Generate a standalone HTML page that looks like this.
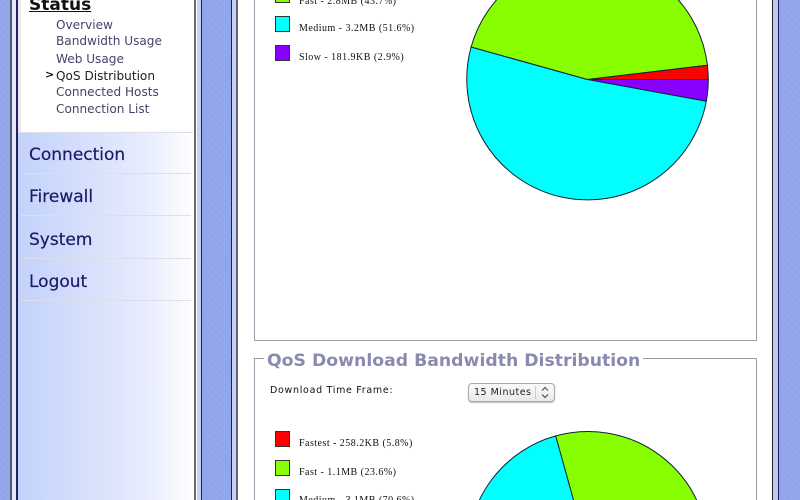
<!DOCTYPE html>
<html><head><meta charset="utf-8"><style>
html,body{margin:0;padding:0;width:800px;height:500px;overflow:hidden;background:#fff}
#w{position:relative;width:800px;height:500px;overflow:clip;background:#fff}
.a{position:absolute}
.sv{font-family:"DejaVu Sans",sans-serif}
.blue{background:#90a4ea;background-image:repeating-linear-gradient(45deg,rgba(255,255,255,.04) 0 2px,rgba(0,0,0,0) 2px 5px)}
.m{left:29px;font:17px/24px "DejaVu Sans",sans-serif;color:#1a1a66;-webkit-text-stroke:.2px #1a1a66}
.sep{left:21px;width:170px;height:1px;background:#dcdfe8}
.s{left:56px;font:12.1px/16px "DejaVu Sans",sans-serif;color:#44446a;white-space:nowrap}
.l{left:299px;font:10px/12px "Liberation Serif",serif;color:#111;white-space:nowrap;letter-spacing:.47px}
.k{left:275px;width:13px;height:14px;border:1px solid #333}
.fs{left:254px;width:501px;border:1px solid #9c9cac}
</style></head><body><div id="w">
<div class="a blue" style="left:0;top:0;width:10px;height:500px"></div>
<div class="a" style="left:10px;top:0;width:2px;height:500px;background:#55556a"></div>
<div class="a" style="left:12px;top:0;width:4px;height:500px;background:#e4e8fc"></div>
<div class="a" style="left:16px;top:0;width:2px;height:500px;background:#22225e"></div>
<div class="a" style="left:18px;top:0;width:176px;height:500px;background:linear-gradient(90deg,#c3d2fb,#e6ebfd 70%,#fff)"></div>
<div class="a" style="left:18px;top:0;width:176px;height:132px;background:#fff"></div>
<div class="a" style="left:18px;top:0;width:3px;height:132px;background:#e8e8ee"></div>
<div class="a" style="left:194px;top:0;width:2px;height:500px;background:#6a6a72"></div>
<div class="a" style="left:196px;top:0;width:1px;height:500px;background:#fff"></div>
<div class="a" style="left:197px;top:0;width:4px;height:500px;background:#c8d0f8"></div>
<div class="a" style="left:201px;top:0;width:1px;height:500px;background:#1c1c60"></div>
<div class="a blue" style="left:202px;top:0;width:29px;height:500px"></div>
<div class="a" style="left:231px;top:0;width:1px;height:500px;background:#1c1c60"></div>
<div class="a" style="left:232px;top:0;width:4px;height:500px;background:#c8d0f8"></div>
<div class="a" style="left:236px;top:0;width:2px;height:500px;background:#66667a"></div>
<div class="a" style="left:772px;top:0;width:1px;height:500px;background:#222"></div>
<div class="a" style="left:773px;top:0;width:5px;height:500px;background:#c0c8f4"></div>
<div class="a" style="left:778px;top:0;width:1px;height:500px;background:#1c1c60"></div>
<div class="a blue" style="left:779px;top:0;width:21px;height:500px"></div>

<div class="a sv" style="left:29px;top:-7px;font-size:17px;line-height:24px;font-weight:bold;color:#111;text-decoration:underline">Status</div>
<div class="a s" style="top:17px">Overview</div>
<div class="a s" style="top:33px">Bandwidth Usage</div>
<div class="a s" style="top:51px">Web Usage</div>
<div class="a sv" style="left:45px;top:68px;font-size:11px;line-height:14px;font-weight:bold;color:#111">&gt;</div>
<div class="a s" style="top:68px;color:#222">QoS Distribution</div>
<div class="a s" style="top:84px">Connected Hosts</div>
<div class="a s" style="top:101px">Connection List</div>

<div class="a sep" style="left:18px;width:175px;top:132px"></div>
<div class="a m" style="top:143px">Connection</div>
<div class="a sep" style="top:173px"></div>
<div class="a m" style="top:185px">Firewall</div>
<div class="a sep" style="top:215px"></div>
<div class="a m" style="top:228px">System</div>
<div class="a sep" style="top:258px"></div>
<div class="a m" style="top:270px">Logout</div>
<div class="a sep" style="top:300px"></div>

<div class="a fs" style="top:-20px;height:359px"></div>
<div class="a fs" style="top:358px;height:160px"></div>
<div class="a sv" style="left:264px;top:349px;padding:0 3px;background:#fff;font-size:17.25px;line-height:24px;font-weight:bold;color:#8a8ab0;white-space:nowrap">QoS Download Bandwidth Distribution</div>

<div class="a k" style="top:-13px;background:#88ff00"></div>
<div class="a l" style="top:-4px">Fast - 2.8MB (43.7%)</div>
<div class="a k" style="top:16px;background:#00ffff"></div>
<div class="a l" style="top:23px">Medium - 3.2MB (51.6%)</div>
<div class="a k" style="top:45px;background:#8800ff"></div>
<div class="a l" style="top:52px">Slow - 181.9KB (2.9%)</div>

<div class="a sv" style="left:270px;top:384px;font-size:9.5px;line-height:13px;letter-spacing:.7px;color:#111;white-space:nowrap">Download Time Frame:</div>
<div class="a" style="left:468px;top:383px;width:85px;height:17px;border:1px solid #aaa;border-radius:4px;background:linear-gradient(#fafafa,#eaeaea);box-shadow:0 1px 1px #bbb"></div>
<div class="a sv" style="left:474px;top:386px;font-size:9.5px;line-height:13px;letter-spacing:.5px;color:#222;white-space:nowrap">15 Minutes</div>
<div class="a" style="left:535px;top:386px;width:1px;height:13px;background:#ccc"></div>
<svg class="a" style="left:536px;top:384px" width="18" height="18"><path d="M6 6.5l3-3 3 3M6 10.5l3 3 3-3" fill="none" stroke="#444" stroke-width="1"/></svg>

<div class="a k" style="top:431px;background:#ff0000"></div>
<div class="a l" style="top:438px">Fastest - 258.2KB (5.8%)</div>
<div class="a k" style="top:460px;background:#88ff00"></div>
<div class="a l" style="top:467px">Fast - 1.1MB (23.6%)</div>
<div class="a k" style="top:489px;background:#00ffff"></div>
<div class="a l" style="top:495px">Medium - 3.1MB (70.6%)</div>

<svg class="a" style="left:0;top:0" width="800" height="500">
<g stroke="#123" stroke-width="1" stroke-linejoin="round">
<path d="M587.5 79.5L708.3 79.5A120.8 120.8 0 0 1 706.3 101.3Z" fill="#8800ff"/>
<path d="M587.5 79.5L706.3 101.3A120.8 120.8 0 1 1 471.1 47.0Z" fill="#00ffff"/>
<path d="M587.5 79.5L471.1 47.0A120.8 120.8 0 0 1 707.4 65.2Z" fill="#88ff00"/>
<path d="M587.5 79.5L707.4 65.2A120.8 120.8 0 0 1 708.3 79.5Z" fill="#ff0000"/>
<path d="M588 552L555.7 435.9A120.5 120.5 0 0 0 467.6 552Z" fill="#00ffff"/>
<path d="M588 552L555.7 435.9A120.5 120.5 0 0 1 708.5 552Z" fill="#88ff00"/>
</g></svg>
</div></body></html>
